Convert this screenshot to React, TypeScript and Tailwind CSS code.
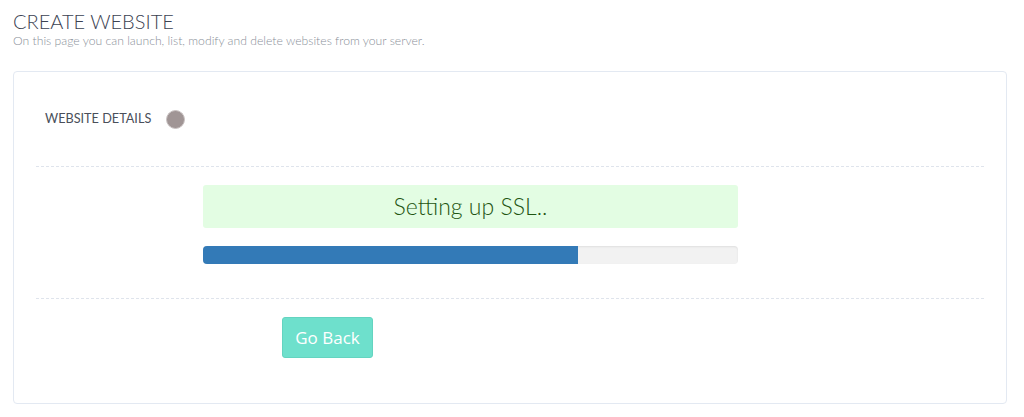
import React from "react";

export default function App() {
  return (
    <div className="min-h-[417px] w-[1024px] bg-white px-[13px] pt-[9px] font-['Lato',_'Noto_Sans',_sans-serif]">
      <h1 className="text-[20px] font-light uppercase leading-[24px] text-[#3b4252]">
        Create Website
      </h1>
      <p className="mt-0 text-[12.2px] font-light leading-[16px] text-[#8a8f99]">
        On this page you can launch, list, modify and delete websites from your server.
      </p>

      <div className="mt-[22px] h-[333px] w-[994px] rounded-[4px] border border-[#e3e9f2] px-[22px]">
        <div className="flex h-[94px] items-center pl-[9px]">
          <span className="text-[12.7px] uppercase text-[#4a4f5a]">Website Details</span>
          <span className="ml-[15px] h-[19px] w-[19px] rounded-full border border-[#c9c2c2] bg-[#a09595]" />
        </div>
        <div className="border-t border-dashed border-[#dfe4ec]" />

        <div className="ml-[167px] w-[535px] pt-[18px]">
          <div className="flex h-[43px] items-center justify-center rounded-[3px] bg-[#e3fde3] text-[23px] font-light text-[#1f5512]">
            Setting up SSL..
          </div>
          <div className="mt-[18px] h-[18px] overflow-hidden rounded-[4px] bg-[#f2f2f2] shadow-[inset_0_1px_2px_rgba(0,0,0,0.08)]">
            <div className="h-full bg-[#337ab7]" style={{ width: "70%" }} />
          </div>
        </div>

        <div className="mt-[34px] border-t border-dashed border-[#dfe4ec]" />
        <div className="pl-[246px] pt-[18px]">
          <button className="h-[41px] w-[91px] rounded-[3px] border border-[#64d4c0] bg-[#6ee0cc] font-['Open_Sans'] text-[17px] text-white">
            Go Back
          </button>
        </div>
      </div>
    </div>
  );
}
